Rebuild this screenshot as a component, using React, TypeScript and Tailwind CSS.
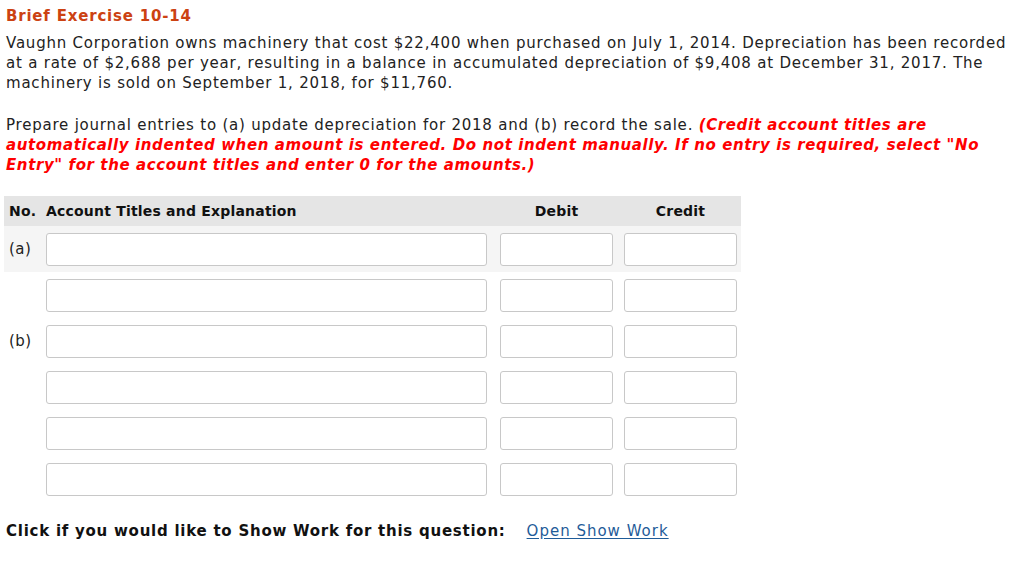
import React from "react";

const rows = ["(a)", "", "(b)", "", "", ""];

export default function App() {
  return (
    <div className="w-[1024px] h-[584px] bg-white text-[#222] font-['DejaVu_Sans',Verdana,sans-serif] overflow-hidden">
      <div className="px-[6px] pt-[6px]">
        <h1 className="text-[15px] leading-[20px] font-bold tracking-[0.8px] text-[#cc4212]">Brief Exercise 10-14</h1>
        <p className="mt-[7px] text-[15px] leading-[20px] tracking-[0.78px] whitespace-nowrap">
          Vaughn Corporation owns machinery that cost $22,400 when purchased on July 1, 2014. Depreciation has been recorded
          <br />
          at a rate of $2,688 per year, resulting in a balance in accumulated depreciation of $9,408 at December 31, 2017. The
          <br />
          machinery is sold on September 1, 2018, for $11,760.
        </p>
        <p className="mt-[22px] text-[15px] leading-[20px] tracking-[0.78px] whitespace-nowrap">
          Prepare journal entries to (a) update depreciation for 2018 and (b) record the sale.{" "}
          <span className="font-bold italic tracking-[0.6px] text-[#ff0000]">
            (Credit account titles are
            <br />
            automatically indented when amount is entered. Do not indent manually. If no entry is required, select "No
            <br />
            Entry" for the account titles and enter 0 for the amounts.)
          </span>
        </p>
      </div>

      <div className="ml-[4px] mt-[21px] w-[737px]">
        <div className="flex items-center h-[30px] bg-[#e5e5e5] text-[14px] font-bold tracking-[0.2px] text-[#111]">
          <div className="w-[42px] pl-[5px]">No.</div>
          <div className="w-[441px]">Account Titles and Explanation</div>
          <div className="w-[113px] ml-[13px] text-center">Debit</div>
          <div className="w-[113px] ml-[11px] text-center">Credit</div>
        </div>
        {rows.map((label, i) => (
          <div key={i} className={`flex items-center h-[46px] ${i === 0 ? "bg-[#f5f5f5]" : ""}`}>
            <div className="w-[42px] pl-[5px] text-[15px] tracking-[0.5px]">{label}</div>
            <input className="w-[441px] h-[33px] border border-[#c8c8c8] rounded-[3px] bg-white" />
            <input className="w-[113px] h-[33px] ml-[13px] border border-[#c8c8c8] rounded-[3px] bg-white" />
            <input className="w-[113px] h-[33px] ml-[11px] border border-[#c8c8c8] rounded-[3px] bg-white" />
          </div>
        ))}
      </div>

      <div className="flex items-center px-[6px] mt-[18px]">
        <span className="text-[15px] font-bold tracking-[0.75px] text-[#111]">Click if you would like to Show Work for this question:</span>
        <a href="#" className="ml-[21px] text-[15px] tracking-[1px] text-[#1f5c99] underline underline-offset-2">Open Show Work</a>
      </div>
    </div>
  );
}
